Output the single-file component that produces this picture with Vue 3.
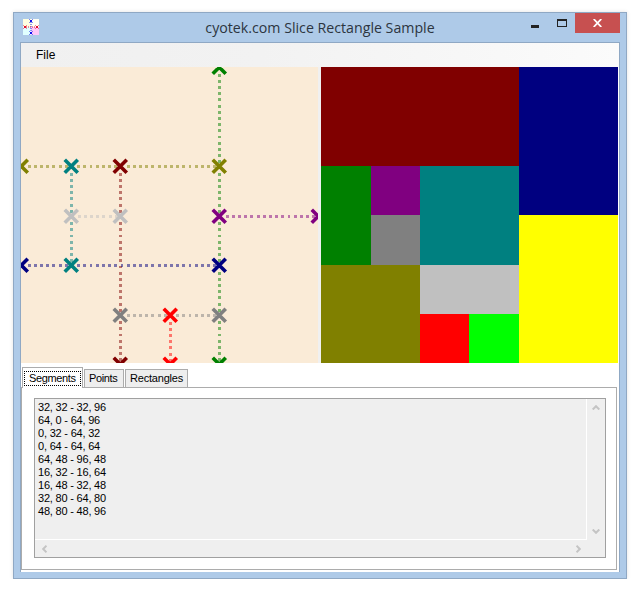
<script setup>
const S = 297 / 96
const p = (v) => v * S
const px = (v) => Math.round(p(v)) + 0.5
const dash = `2.9 ${2 * S - 2.9}`
const segments = [
  { a: [32, 32], b: [32, 96], c: '#800000' },
  { a: [64, 0], b: [64, 96], c: '#008000' },
  { a: [0, 32], b: [64, 32], c: '#808000' },
  { a: [0, 64], b: [64, 64], c: '#000080' },
  { a: [64, 48], b: [96, 48], c: '#800080' },
  { a: [16, 32], b: [16, 64], c: '#008080' },
  { a: [16, 48], b: [32, 48], c: '#c0c0c0' },
  { a: [32, 80], b: [64, 80], c: '#808080' },
  { a: [48, 80], b: [48, 96], c: '#ff0000' },
]
const R = 6.5
const cross = ([x, y]) => {
  const cx = px(x) - 0.25
  const cy = px(y) - 0.25
  return `M${cx - R} ${cy - R}L${cx + R} ${cy + R}M${cx - R} ${cy + R}L${cx + R} ${cy - R}`
}
const rects = [
  { n: 'maroon', c: '#800000' }, { n: 'navy', c: '#000080' }, { n: 'green', c: '#008000' },
  { n: 'purple', c: '#800080' }, { n: 'gray', c: '#808080' }, { n: 'teal', c: '#008080' },
  { n: 'yellow', c: '#ffff00' }, { n: 'olive', c: '#808000' }, { n: 'silver', c: '#c0c0c0' },
  { n: 'red', c: '#ff0000' }, { n: 'lime', c: '#00ff00' },
]
const lines = [
  '32, 32 - 32, 96', '64, 0 - 64, 96', '0, 32 - 64, 32', '0, 64 - 64, 64', '64, 48 - 96, 48',
  '16, 32 - 16, 64', '16, 48 - 32, 48', '32, 80 - 64, 80', '48, 80 - 48, 96',
]
</script>

<template>
  <div class="window">
    <header class="titlebar">
      <svg class="app-icon" width="16" height="16" viewBox="0 0 16 16">
        <rect width="8" height="8" fill="#ffffe0" />
        <rect x="8" width="8" height="8" fill="#fffff4" />
        <rect y="8" width="8" height="8" fill="#e0ffff" />
        <rect x="8" y="8" width="8" height="8" fill="#ffc8f8" />
        <path d="M8 3V13" stroke="#2030e0" stroke-dasharray="1 1" />
        <path d="M3 8H13" stroke="#e02040" stroke-dasharray="1 1" />
        <path d="M6.5 .5l3 3m0-3l-3 3M6.5 12.5l3 3m0-3l-3 3" stroke="#1010f0" />
        <path d="M.5 6.5l3 3m0-3l-3 3M12.5 6.5l3 3m0-3l-3 3" stroke="#e01030" />
      </svg>
      <div class="title">cyotek.com Slice Rectangle Sample</div>
      <div class="controls">
        <span class="min"></span>
        <span class="max"></span>
        <span class="close">
          <svg width="9" height="8" viewBox="0 0 9 8"><path d="M.7 0L8.3 8M8.3 0L.7 8" stroke="#fff" stroke-width="1.8" /></svg>
        </span>
      </div>
    </header>

    <main class="client">
      <nav class="menubar"><span class="menu-item">File</span></nav>
      <section class="canvases">
        <svg class="plot" width="297" height="296" viewBox="0 0 297 296">
          <g v-for="(s, i) in segments" :key="i" shape-rendering="crispEdges">
            <line :x1="px(s.a[0])" :y1="px(s.a[1])" :x2="px(s.b[0])" :y2="px(s.b[1])"
              :stroke="s.c" stroke-width="3.4" :stroke-dasharray="dash" stroke-opacity="0.5" />
          </g>
          <g v-for="(s, i) in segments" :key="'m' + i">
            <path :d="cross(s.a)" :stroke="s.c" stroke-width="3.6" fill="none" />
            <path :d="cross(s.b)" :stroke="s.c" stroke-width="3.6" fill="none" />
          </g>
        </svg>
        <div class="treemap">
          <div v-for="r in rects" :key="r.n" :class="['cell', r.n]" :style="{ background: r.c }"></div>
        </div>
      </section>

      <section class="tabs">
        <div class="tabstrip">
          <div class="tab active"><span class="focus">Segments</span></div>
          <div class="tab points">Points</div>
          <div class="tab rectangles">Rectangles</div>
        </div>
        <div class="panel">
          <div class="listbox">
            <div class="text"><div v-for="l in lines" :key="l" class="line">{{ l }}</div></div>
            <div class="vscroll">
              <svg width="8" height="5" viewBox="0 0 8 5"><path d="M.7 4.5L4 1.2L7.3 4.5" class="arrow" /></svg>
              <svg width="8" height="5" viewBox="0 0 8 5"><path d="M.7 .5L4 3.8L7.3 .5" class="arrow" /></svg>
            </div>
            <div class="hscroll">
              <svg width="5" height="8" viewBox="0 0 5 8"><path d="M4.5 .7L1.2 4L4.5 7.3" class="arrow" /></svg>
              <svg width="5" height="8" viewBox="0 0 5 8"><path d="M.5 .7L3.8 4L.5 7.3" class="arrow" /></svg>
            </div>
          </div>
        </div>
      </section>
    </main>
  </div>
</template>

<style>
html, body { background: #fff; }
</style>

<style scoped>
.window {
  box-sizing: border-box;
  width: 614px;
  height: 567px;
  margin: 12px 0 0 13px;
  background: #aecae8;
  border: 1px solid #8fa8c4;
  box-shadow: 0 0 4px rgba(0, 0, 0, 0.12);
  padding: 0 6px 6px 6px;
  display: flex;
  flex-direction: column;
  font-family: "Liberation Sans", Arial, sans-serif;
}
.titlebar {
  height: 29px;
  flex: none;
  display: grid;
  grid-template-columns: 1fr auto 1fr;
  align-items: start;
}
.app-icon { margin-top: 6px; margin-left: 3px; }
.title {
  font-family: "Open Sans", "Noto Sans", sans-serif;
  font-size: 14.2px;
  line-height: 20px;
  margin-top: 5px;
  color: #2c3540;
  white-space: nowrap;
}
.controls {
  justify-self: end;
  display: flex;
  align-items: flex-start;
}
.min {
  width: 8px;
  height: 2.5px;
  background: #222;
  margin-top: 12px;
  margin-right: 18px;
}
.max {
  box-sizing: border-box;
  width: 10px;
  height: 8px;
  border: 1px solid #222;
  border-top-width: 2px;
  margin-top: 6px;
  margin-right: 8px;
}
.close {
  width: 45px;
  height: 20px;
  background: #c75050;
  display: flex;
  align-items: center;
  justify-content: center;
}
.client {
  flex: 1;
  min-height: 0;
  background: #fff;
  border: 1px solid #8fa8c4;
  border-bottom: 0;
  display: flex;
  flex-direction: column;
}
.menubar {
  height: 24px;
  flex: none;
  background: linear-gradient(to right, #f0f0f0, #f2f2f2 40%, #fbfbfb);
  display: flex;
  align-items: center;
  padding-left: 15px;
  font-size: 12px;
  color: #000;
}
.canvases {
  flex: none;
  display: flex;
  gap: 3px;
  height: 296px;
  background: #f0f0f0;
  width: 597px;
}
.plot { background: #faebd7; display: block; overflow: hidden; }
.treemap {
  width: 297px;
  height: 296px;
  display: grid;
  grid-template-columns: 50px 49px 49px 50px 49.5px 49.5px;
  grid-template-rows: 49.5px 49.5px 49px 50px 49px 49px;
}
.maroon { grid-area: 1 / 1 / 3 / 5; }
.navy { grid-area: 1 / 5 / 4 / 7; }
.green { grid-area: 3 / 1 / 5 / 2; }
.purple { grid-area: 3 / 2 / 4 / 3; }
.gray { grid-area: 4 / 2 / 5 / 3; }
.teal { grid-area: 3 / 3 / 5 / 5; }
.yellow { grid-area: 4 / 5 / 7 / 7; }
.olive { grid-area: 5 / 1 / 7 / 3; }
.silver { grid-area: 5 / 3 / 6 / 5; }
.red { grid-area: 6 / 3 / 7 / 4; }
.lime { grid-area: 6 / 4 / 7 / 5; }
.tabs {
  flex: 1;
  min-height: 0;
  display: flex;
  flex-direction: column;
  padding: 4px 2px 2px 0;
  font-size: 11px;
  letter-spacing: -0.2px;
  color: #000;
}
.tabstrip {
  display: flex;
  height: 20px;
  flex: none;
  align-items: flex-end;
  position: relative;
  z-index: 1;
}
.tab {
  box-sizing: border-box;
  height: 18px;
  line-height: 17px;
  margin-left: 1px;
  padding-left: 4px;
  background: #eeeeee;
  border: 1px solid #acacac;
  border-bottom: 0;
}
.points { width: 40px; letter-spacing: -0.35px; }
.rectangles { width: 63px; }
.tab.active {
  width: 61px;
  height: 21px;
  margin-bottom: -1px;
  background: #fff;
  padding: 3px 1px 0 1px;
}
.focus {
  display: block;
  box-sizing: border-box;
  height: 15px;
  line-height: 12px;
  padding-left: 4px;
  letter-spacing: -0.35px;
  border: 1px dotted #000;
}
.panel {
  flex: 1;
  min-height: 0;
  border: 1px solid #acacac;
  background: #fff;
  padding: 10px 10px 11px 12px;
  display: flex;
}
.listbox {
  flex: 1;
  box-sizing: border-box;
  border: 1px solid #a0a0a0;
  background: #efefef;
  display: grid;
  grid-template-columns: 1fr 18px;
  grid-template-rows: 1fr 17px;
}
.text {
  padding: 2px 2px 0 3px;
  border-right: 1px solid #fff;
  border-bottom: 1px solid #fff;
  line-height: 13px;
}
.line { height: 13px; white-space: nowrap; }
.vscroll {
  display: flex;
  flex-direction: column;
  justify-content: space-between;
  align-items: center;
  padding: 6px 0;
}
.hscroll {
  display: flex;
  justify-content: space-between;
  align-items: center;
  padding: 0 6px 0 7px;
}
.arrow { fill: none; stroke: #c4c4c4; stroke-width: 2; }
</style>
